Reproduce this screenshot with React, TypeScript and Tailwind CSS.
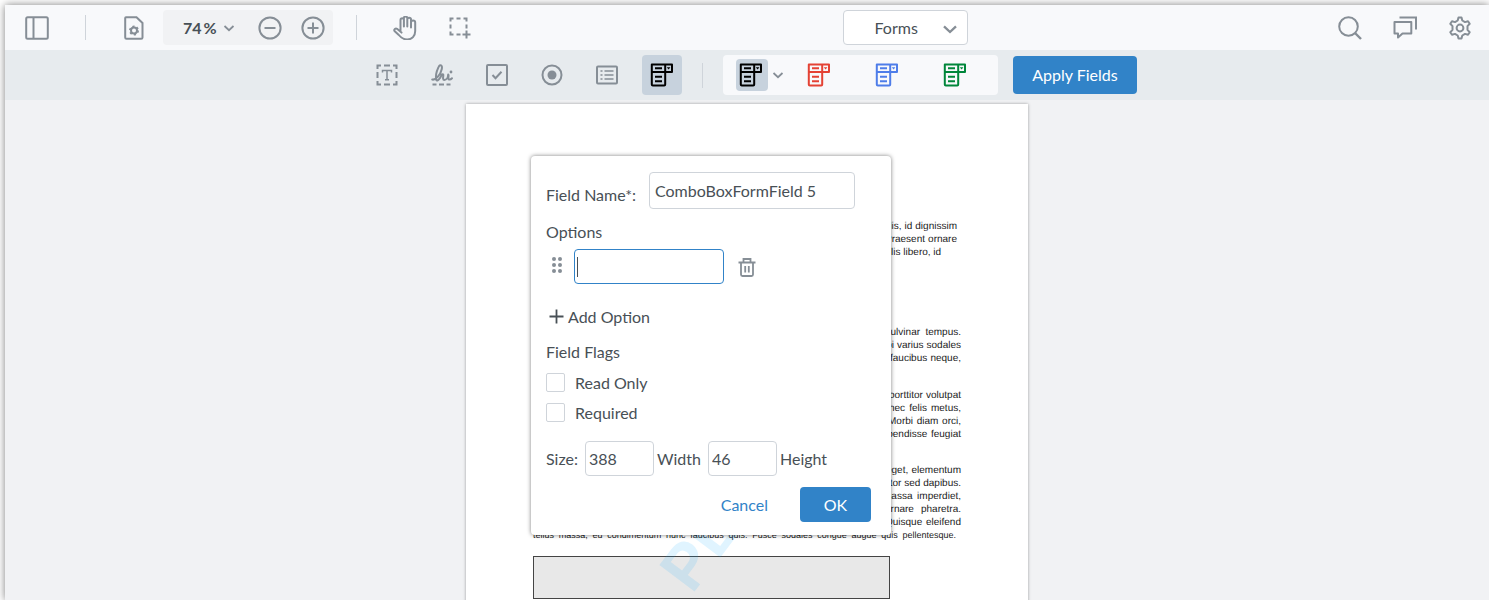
import React, { useState } from "react";
import clsx from "clsx";

type IconProps = { className?: string };

function Svg({ className = "h-6 w-6", children }: IconProps & { children: React.ReactNode }) {
  return (
    <svg viewBox="0 0 24 24" fill="none" stroke="currentColor" strokeWidth={2} className={className} aria-hidden="true">
      {children}
    </svg>
  );
}

const PanelIcon = () => (
  <Svg>
    <rect x="1.2" y="1.2" width="21.6" height="21.6" rx="1.5" />
    <path d="M8.5 1v22" />
  </Svg>
);

const PageSettingsIcon = () => (
  <Svg>
    <path d="M4 1.2h10.5L20.5 7v14.5a1.3 1.3 0 0 1-1.3 1.3H4.500a1.3 1.3 0 0 1-1.3-1.3V2a.8.8 0 0 1 .8-.8z" />
    <circle cx="12" cy="14.5" r="3" />
    <circle cx="12" cy="14.5" r="4.2" strokeWidth={1.6} strokeDasharray="2.2 2.2" />
  </Svg>
);

const ZoomOutIcon = () => (
  <Svg>
    <circle cx="12" cy="12" r="10.6" />
    <path d="M6.5 12h11" />
  </Svg>
);

const ZoomInIcon = () => (
  <Svg>
    <circle cx="12" cy="12" r="10.6" />
    <path d="M6.5 12h11M12 6.500v11" />
  </Svg>
);

const HandIcon = () => (
  <Svg>
    <path
      strokeLinecap="round"
      strokeLinejoin="round"
      d="M7.5 14.5V4a1.7 1.7 0 0 1 3.4 0V10.5M10.9 10.5V2.4a1.6 1.6 0 0 1 3.4-.4V10.5M14.3 10.5V3.5a1.7 1.7 0 0 1 3.7 0V11.5M18 6.5a1.9 1.9 0 0 1 4.2 0V15c0 5-3.2 8.500-8 8.500-4 0-6-1.500-8.400-4.500L1.500 15c-.9-1.500 1-3 2.500-2.200l4.500 3.800"
    />
  </Svg>
);

const MarqueeIcon = () => (
  <Svg>
    <path d="M2.5 5.500v-3h3M8.500 2.500h4M15.500 2.500h3v3M18.500 8.500v4M2.500 8.500v4M2.500 15.500v3h3M8.500 18.500h4" />
    <path d="M18.5 14.500v8M14.500 18.500h8" />
  </Svg>
);

const SearchIcon = () => (
  <Svg>
    <circle cx="10.5" cy="10.5" r="9.3" />
    <path d="M17 17l6 6" strokeWidth={2.4} />
  </Svg>
);

const CommentsIcon = () => (
  <Svg>
    <path d="M6.5 1.500H23v12" />
    <path d="M1.5 6h16.800v11.500H9.500L5 21.500v-4H1.500z" strokeLinejoin="round" />
  </Svg>
);

const GearIcon = () => (
  <Svg>
    <path
      strokeLinejoin="round"
      d="M9.7 4.500 10.500 1.500h3l.8 3 2.700 1.600 3-.9 1.700 2.600-2.200 2.300v3.800l2.200 2.300-1.700 2.600-3-.9-2.700 1.600-.8 3h-3l-.8-3L7 17.900l-3 .9-1.700-2.600 2.200-2.300v-3.800L2.300 7.800 4 5.200l3 .9z"
    />
    <circle cx="12" cy="12" r="3.4" />
  </Svg>
);

const TextFieldIcon = () => (
  <Svg>
    <path d="M2.5 6V2.500H6M9 2.500h6M18 2.500h3.500V6M21.500 9v6M21.500 18v3.500H18M15 21.500H9M6 21.500H2.500V18M2.500 15V9" />
    <path d="M7.5 9.500V7.500h9v2M12 7.500v9M10 16.700h4" strokeWidth={1.5} />
  </Svg>
);

const SignatureIcon = () => (
  <Svg>
    <path
      strokeLinecap="round"
      strokeLinejoin="round"
      d="M2.2 16.500c3.500 1 8.500-5 9.600-10.500.8-4-1.800-5.300-3.300-1.800C6.500 8.500 5.500 14 6.300 16.800c1 2.500 4.200-2 5.300-5 1.200-1.300 2-.3 1.700 1-.4 2-.5 4.200 1 4.200 2.200 0 3.700-2.700 3.900-5.500 1 1 0 2.500.1 4 .2 1.500 2 1.500 3.700-.3"
    />
    <circle cx="21" cy="9" r="1.4" fill="currentColor" stroke="none" />
    <path d="M2.5 21.500h4M9 21.500h5M16.500 21.500h4" />
  </Svg>
);

const CheckFieldIcon = () => (
  <Svg>
    <rect x="2" y="2" width="20" height="20" rx="1" />
    <path d="m7.5 12 3 3.200 6-6.500" />
  </Svg>
);

const RadioFieldIcon = () => (
  <Svg>
    <circle cx="12" cy="12" r="9.5" />
    <circle cx="12" cy="12" r="4.5" fill="currentColor" stroke="none" />
  </Svg>
);

const ListFieldIcon = () => (
  <Svg>
    <rect x="2" y="3.5" width="20" height="17" rx="1" />
    <path d="M5.5 8h2M9.500 8h9M5.500 12h2M9.500 12h9M5.500 16h2M9.500 16h9" strokeWidth={1.7} />
  </Svg>
);

const ComboFieldIcon = () => (
  <Svg>
    <path d="M1.8 1.500H22v7.500H1.800zM1.800 9v12.500a1 1 0 0 0 1 1h11.400a1 1 0 0 0 1-1V1.500" strokeLinejoin="round" />
    <path d="M5 5.300h7M5 13.700h7M5 18.300h7" />
    <path d="M16.8 4.300h3.600l-1.800 2.300z" fill="currentColor" stroke="none" />
  </Svg>
);

const ChevronIcon = ({ className }: IconProps) => (
  <Svg className={className}>
    <path d="m3 8 9 8.500L21 8" strokeWidth={3.5} />
  </Svg>
);

const GripIcon = () => (
  <svg viewBox="0 0 12 18" className="h-[18px] w-3" fill="currentColor" aria-hidden="true">
    {[3, 9, 15].map((y) => (
      <g key={y}>
        <circle cx="3" cy={y} r="2" />
        <circle cx="9" cy={y} r="2" />
      </g>
    ))}
  </svg>
);

const TrashIcon = () => (
  <svg viewBox="0 0 18 20" className="h-5 w-[18px]" fill="none" stroke="currentColor" strokeWidth={1.8} aria-hidden="true">
    <path d="M.5 5.500h17M3 5.500v12a1.500 1.500 0 0 0 1.500 1.500h9a1.500 1.500 0 0 0 1.500-1.500v-12M5.500 5.500V2h7v3.500M7.200 9v6.500M10.800 9v6.500" />
  </svg>
);

function ToolButton({ label, active, children }: { label: string; active?: boolean; children: React.ReactNode }) {
  return (
    <button
      type="button"
      aria-label={label}
      className={clsx("flex h-10 w-10 items-center justify-center rounded", active && "bg-[#c7d2dd] text-black")}
    >
      {children}
    </button>
  );
}

function Divider() {
  return <div className="h-[25px] w-px bg-[#cfd4da]" />;
}

function Header() {
  return (
    <header className="flex h-[45px] items-center bg-[#f8f9fb] text-[#868e96]">
      <div className="flex items-center">
        <div className="flex w-20 items-center pl-3">
          <ToolButton label="Panel"><PanelIcon /></ToolButton>
        </div>
        <Divider />
        <div className="ml-7 mr-[9px]">
          <ToolButton label="View controls"><PageSettingsIcon /></ToolButton>
        </div>
        <div className="flex h-[35px] w-[170px] items-center rounded bg-[#f1f2f4] pl-5">
          <button type="button" aria-label="Zoom level" className="flex items-center gap-0.5 font-bold text-[#485056]">
            <span>74</span>
            <span className="mr-1">%</span>
            <ChevronIcon className="h-3 w-3 text-[#868e96]" />
          </button>
          <div className="ml-auto flex gap-[3px]">
            <ToolButton label="Zoom out"><ZoomOutIcon /></ToolButton>
            <ToolButton label="Zoom in"><ZoomInIcon /></ToolButton>
          </div>
        </div>
        <div className="ml-[23px] mr-7">
          <Divider />
        </div>
        <div className="flex gap-[15px]">
          <ToolButton label="Pan"><HandIcon /></ToolButton>
          <ToolButton label="Marquee zoom"><MarqueeIcon /></ToolButton>
        </div>
      </div>
      <div className="flex flex-1 justify-center">
        <div className="relative">
          <select
            aria-label="Mode"
            className="h-[35px] w-[125px] appearance-none rounded border border-[#cfd4da] bg-white pl-[31px] text-[#485056]"
          >
            <option>Forms</option>
          </select>
          <ChevronIcon className="pointer-events-none absolute right-2.5 top-[11px] h-4 w-4" />
        </div>
      </div>
      <div className="flex gap-[15px] pr-[9px]">
        <ToolButton label="Search"><SearchIcon /></ToolButton>
        <ToolButton label="Comments"><CommentsIcon /></ToolButton>
        <ToolButton label="Settings"><GearIcon /></ToolButton>
      </div>
    </header>
  );
}

function FormsToolbar() {
  return (
    <div className="flex h-[50px] items-center justify-center bg-[#e7ebee] pl-2.5 text-[#868e96]">
      <div className="flex gap-[15px]">
        <ToolButton label="Text field"><TextFieldIcon /></ToolButton>
        <ToolButton label="Signature field"><SignatureIcon /></ToolButton>
        <ToolButton label="Check box field"><CheckFieldIcon /></ToolButton>
        <ToolButton label="Radio field"><RadioFieldIcon /></ToolButton>
        <ToolButton label="List box field"><ListFieldIcon /></ToolButton>
        <ToolButton label="Combo box field" active><ComboFieldIcon /></ToolButton>
      </div>
      <div className="mx-5">
        <Divider />
      </div>
      <div className="flex h-10 w-[275px] items-center rounded bg-[#f8f9fb] pl-[13px]">
        <button type="button" aria-label="Black" className="flex h-8 w-8 items-center rounded bg-[#c7d2dd] pl-[3px] text-black">
          <ComboFieldIcon />
        </button>
        <button type="button" aria-label="Style options" className="flex w-5 justify-center">
          <ChevronIcon className="h-3 w-3" />
        </button>
        <div className="ml-[11px] flex gap-7">
          <button type="button" aria-label="Red" className="flex w-10 justify-center text-[#e44234]"><ComboFieldIcon /></button>
          <button type="button" aria-label="Blue" className="flex w-10 justify-center text-[#4e7de9]"><ComboFieldIcon /></button>
          <button type="button" aria-label="Green" className="flex w-10 justify-center text-[#00863a]"><ComboFieldIcon /></button>
        </div>
      </div>
      <button type="button" className="ml-[15px] h-[38px] w-[124px] rounded bg-[#3183c8] text-white">
        Apply Fields
      </button>
    </div>
  );
}

// Each line is a text and its measured width on the sheet.
const paragraphs: { gap: string; lines: { text: string; box: string }[] }[] = [
  {
    gap: "",
    lines: [
      { text: "felis, id dignissim", box: "mr-1 w-[76px]" },
      { text: "Praesent ornare", box: "mr-1 w-[72px]" },
      { text: "mollis libero, id", box: "mr-5 w-[66px]" },
    ],
  },
  {
    gap: "mt-[67px]",
    lines: [
      { text: "pulvinar tempus.", box: "w-[76px]" },
      { text: "Morbi varius sodales", box: "w-[92px]" },
      { text: "faucibus neque,", box: "w-[71px]" },
    ],
  },
  {
    gap: "mt-6",
    lines: [
      { text: "porttitor volutpat", box: "w-[72px]" },
      { text: "nec felis metus,", box: "w-[72px]" },
      { text: "Morbi diam orci,", box: "w-[73px]" },
      { text: "Suspendisse feugiat", box: "w-[91px]" },
    ],
  },
  {
    gap: "mt-[23px]",
    lines: [
      { text: "eget, elementum", box: "w-[75px]" },
      { text: "tortor sed dapibus.", box: "w-[83px]" },
      { text: "massa imperdiet,", box: "w-[78px]" },
      { text: "ornare pharetra.", box: "w-[76px]" },
      { text: "Quisque eleifend", box: "w-[76px]" },
    ],
  },
];

function Sheet() {
  return (
    <div className="relative min-h-[727px] w-[562px] bg-white px-[67px] pt-[116px] font-['Liberation_Sans',sans-serif] text-[10px] leading-[13px] text-[#222] shadow-[0_0_3px_rgba(0,0,0,0.35)] [text-rendering:geometricPrecision]">
      {paragraphs.map((p, i) => (
        <div key={i} className={clsx("flex flex-col items-end", p.gap)}>
          {p.lines.map((line) => (
            <p key={line.text} className={clsx("whitespace-nowrap [text-align-last:justify]", line.box)}>
              {line.text}
            </p>
          ))}
        </div>
      ))}
      <p className="w-[423px] whitespace-nowrap text-[9px] [text-align-last:justify]">
        tellus massa, eu condimentum nunc faucibus quis. Fusce sodales congue augue quis pellentesque.
      </p>
      <div className="mt-3.5 h-[43px] w-[357px] border border-[#444] bg-[#e8e8e8]" />
      <div className="pointer-events-none absolute left-[234px] top-[433px] origin-bottom-left -rotate-[53deg] text-[64px] font-bold leading-[64px] text-[#00aaff]/12">
        PL
      </div>
    </div>
  );
}

const inputClass = "rounded border border-[#cfd4da] bg-white outline-none";

function FieldDialog() {
  const [name, setName] = useState("ComboBoxFormField 5");
  const [option, setOption] = useState("");
  const [width, setWidth] = useState("388");
  const [height, setHeight] = useState("46");

  return (
    <form
      role="dialog"
      aria-label="Form field"
      onSubmit={(e) => e.preventDefault()}
      className="absolute left-1/2 top-14 -ml-[216px] w-[360px] rounded bg-white px-[15px] pb-[13px] pt-4 shadow-[0_0_4px_rgba(0,0,0,0.5)]"
    >
      <div className="flex">
        <label htmlFor="field-name" className="w-[103px] pt-[11px]">Field Name*:</label>
        <input
          id="field-name"
          value={name}
          onChange={(e) => setName(e.target.value)}
          className={clsx(inputClass, "h-[37px] w-[206px] px-[5px]")}
        />
      </div>
      <label htmlFor="option" className="mt-[11px] block">Options</label>
      <div className="mt-[5px] flex h-[35px] items-center text-[#868e96]">
        <div className="w-7 pb-1 pl-[5px]">
          <GripIcon />
        </div>
        <div className="relative">
          <input
            id="option"
            value={option}
            onChange={(e) => setOption(e.target.value)}
            className="block h-[35px] w-[150px] rounded border border-[#3183c8] bg-white px-0.5 text-[#485056] outline-none"
          />
          {option === "" && <span className="pointer-events-none absolute left-[3px] top-2 h-5 w-px bg-[#485056]" />}
        </div>
        <button type="button" aria-label="Delete option" className="ml-3.5">
          <TrashIcon />
        </button>
      </div>
      <button type="button" className="mt-[21px] flex items-center gap-1 pl-0.5">
        <svg viewBox="0 0 16 16" className="h-4 w-4" stroke="currentColor" strokeWidth={1.8} aria-hidden="true">
          <path d="M1.5 7.500h14M8.500 .5v14" />
        </svg>
        Add Option
      </button>
      <fieldset className="mt-[11px]">
        <legend>Field Flags</legend>
        <div className="mt-[6px] flex flex-col gap-1.5">
          {["Read Only", "Required"].map((flag) => (
            <label key={flag} className="flex h-6 items-center gap-2.5">
              <input type="checkbox" className="h-[19px] w-[19px] appearance-none rounded-xs border border-[#cfd4da] bg-white checked:bg-[#3183c8]" />
              <span className="pt-0.5">{flag}</span>
            </label>
          ))}
        </div>
      </fieldset>
      <div className="mt-[17px] flex items-center">
        <label htmlFor="width">Size:</label>
        <input
          id="width"
          value={width}
          onChange={(e) => setWidth(e.target.value)}
          className={clsx(inputClass, "ml-[7px] mr-[3px] h-[35px] w-[69px] px-[3px]")}
        />
        <label htmlFor="width">Width</label>
        <input
          id="height"
          value={height}
          onChange={(e) => setHeight(e.target.value)}
          className={clsx(inputClass, "ml-[7px] mr-[3px] h-[35px] w-[69px] px-[3px]")}
        />
        <label htmlFor="height">Height</label>
      </div>
      <div className="mt-[11px] flex justify-end gap-8 pr-[5px]">
        <button type="button" className="text-[#3183c8]">Cancel</button>
        <button type="submit" className="h-[35px] w-[71px] rounded bg-[#3183c8] text-white">OK</button>
      </div>
    </form>
  );
}

export default function App() {
  return (
    <div className="h-screen overflow-hidden bg-white pl-[5px] pt-[5px] font-[Lato,sans-serif] text-base text-[#485056]">
      <div className="flex h-full flex-col bg-[#f1f2f4] shadow-[0_0_8px_rgba(0,0,0,0.5)]">
        <Header />
        <FormsToolbar />
        <main className="relative flex flex-1 justify-center overflow-hidden pt-1">
          <Sheet />
          <FieldDialog />
        </main>
      </div>
    </div>
  );
}
